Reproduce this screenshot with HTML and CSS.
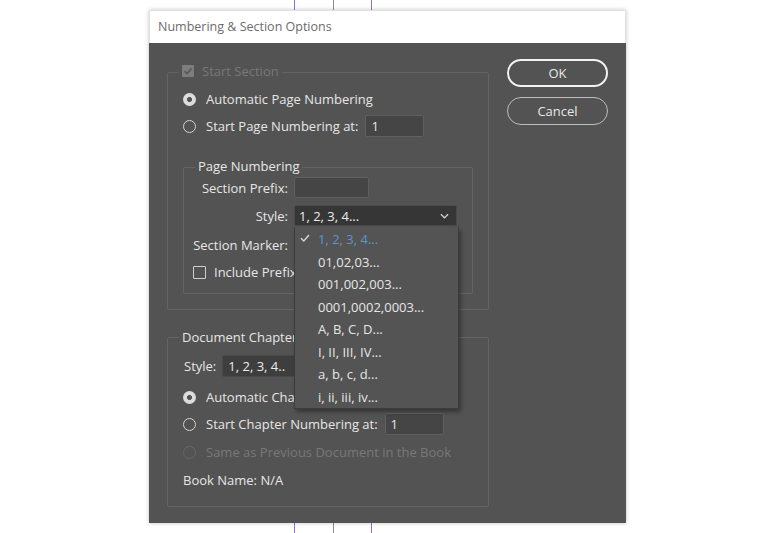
FILE: index.html
```html
<!DOCTYPE html>
<html>
<head>
<meta charset="utf-8">
<link rel="stylesheet" href="styles.css">
</head>
<body>
<div class="stage">
  <div class="guide guide-a"></div>
  <div class="guide guide-b"></div>
  <div class="guide guide-c"></div>

  <div class="dialog">
    <div class="titlebar">Numbering &amp; Section Options</div>
    <div class="dbody">
      <div class="leftcol">
        <div class="group g1">
          <div class="legend disabled"><span class="cbox cbox-dis"><svg viewBox="0 0 12 12" width="12" height="12"><path d="M2.5 6.2 L5 8.6 L9.6 3.4" fill="none" stroke="#5a5a5a" stroke-width="1.8"/></svg></span>Start Section</div>
          <div class="row r-auto"><span class="radio on"></span>Automatic Page Numbering</div>
          <div class="row r-start"><span class="radio"></span>Start Page Numbering at:<span class="field f-start">1</span></div>

          <div class="group sub">
            <div class="legend leg-sub">Page Numbering</div>
            <div class="row r-prefix"><span class="lbl">Section Prefix:</span><span class="field f-prefix"></span></div>
            <div class="row r-style"><span class="lbl">Style:</span><span class="select s-style">1, 2, 3, 4...<svg class="chev" viewBox="0 0 10 6" width="9" height="6"><path d="M1 1 L5 5 L9 1" fill="none" stroke="#cfcfcf" stroke-width="1.4"/></svg></span></div>
            <div class="row r-marker"><span class="lbl">Section Marker:</span></div>
            <div class="row r-incl"><span class="cbox"></span><span class="clip clip-incl">Include Prefix</span></div>
          </div>
        </div>

        <div class="group g2">
          <div class="legend">Document Chapter</div>
          <div class="row r-cstyle"><span class="lbl2">Style:</span><span class="select s-cstyle"><span class="clip clip-sel">1, 2, 3, 4..</span></span></div>
          <div class="row r-cauto"><span class="radio on"></span><span class="clip clip-cauto">Automatic Cha</span></div>
          <div class="row r-cstart"><span class="radio"></span>Start Chapter Numbering at:<span class="field f-cstart">1</span></div>
          <div class="row r-same disabled"><span class="radio radio-dis"></span>Same as Previous Document in the Book</div>
          <div class="row r-book">Book Name: N/A</div>
        </div>
      </div>

      <div class="rightcol">
        <div class="btn btn-ok">OK</div>
        <div class="btn btn-cancel">Cancel</div>
      </div>
    </div>

    <div class="menu">
      <div class="mitem sel"><svg class="check" viewBox="0 0 10 10" width="10" height="10"><path d="M1 5.2 L3.8 8 L9 2" fill="none" stroke="#d8d8d8" stroke-width="1.4"/></svg>1, 2, 3, 4...</div>
      <div class="mitem">01,02,03...</div>
      <div class="mitem">001,002,003...</div>
      <div class="mitem">0001,0002,0003...</div>
      <div class="mitem">A, B, C, D...</div>
      <div class="mitem">I, II, III, IV...</div>
      <div class="mitem">a, b, c, d...</div>
      <div class="mitem">i, ii, iii, iv...</div>
    </div>
  </div>
</div>
</body>
</html>
```
FILE: styles.css
```css
* { box-sizing: border-box; }
html, body { margin: 0; padding: 0; }
body {
  background: #ffffff;
  width: 768px;
  height: 533px;
  overflow: hidden;
  font-family: "Open Sans", "Noto Sans", sans-serif;
  font-size: 13px;
  color: #e6e6e6;
}
.stage { position: relative; width: 768px; height: 533px; padding-top: 10px; }

.guide { position: absolute; top: 0; width: 1px; height: 533px; }
.guide-a { left: 294px; background: #9a6bd8; }
.guide-b { left: 333px; background: #8c8c8c; }
.guide-c { left: 371px; background: #9a6bd8; }

.dialog {
  position: relative;
  margin-left: 149px;
  width: 477px;
  height: 513px;
  box-shadow: 0 0 4px rgba(0,0,0,0.25);
}
.titlebar {
  height: 33px;
  background: #ffffff;
  border: 1px solid #e2e2e2;
  border-bottom: none;
  padding-left: 8px;
  line-height: 31px;
  color: #6c6c6c;
  font-size: 12.5px;
}
.dbody {
  height: 480px;
  background: #535353;
  display: flex;
  padding: 0 18px 0 18px;
}
.leftcol { width: 322px; padding-top: 29px; }
.rightcol {
  margin-left: 18px;
  padding-top: 16px;
  display: flex;
  flex-direction: column;
  gap: 10px;
}
.btn {
  width: 101px;
  height: 28px;
  border-radius: 14px;
  display: flex;
  align-items: center;
  justify-content: center;
  font-size: 13px;
  color: #e8e8e8;
}
.btn-ok { border: 2px solid #f2f2f2; }
.btn-cancel { border: 1px solid #bdbdbd; }

.group {
  border: 1px solid #646464;
  border-radius: 2px;
}
.g1 { height: 238px; padding-left: 15px; }
.g2 { margin-top: 27px; height: 170px; padding-left: 15px; }

.legend {
  display: flex;
  align-items: center;
  width: max-content;
  height: 20px;
  margin: -12px 0 0 -4px;
  padding: 0 4px 0 3px;
  background: #535353;
  white-space: nowrap;
}
.g2 .legend { margin-top: -11px; }
.leg-sub { margin: -12px 0 0 11px; padding: 0 3px; }
.disabled { color: #787878; }

.row {
  display: flex;
  align-items: center;
  height: 22px;
  white-space: nowrap;
}
.r-auto { margin-top: 7px; }
.r-start { margin-top: 5px; }

.clip { display: block; overflow: hidden; white-space: nowrap; }

.radio {
  width: 13px;
  height: 13px;
  border-radius: 50%;
  border: 1.5px solid #d4d4d4;
  margin-right: 10px;
  flex: none;
}
.radio.on {
  border: none;
  background: radial-gradient(circle, #555 0 2.2px, #dcdcdc 2.8px);
}
.radio-dis { border-color: #686868; }

.cbox {
  width: 12px;
  height: 12px;
  border: 1.5px solid #cfcfcf;
  border-radius: 1px;
  margin-right: 8px;
  flex: none;
  display: flex;
}
.cbox-dis {
  border: none;
  background: #7d7d7d;
}

.field {
  height: 22px;
  background: #454545;
  border: 1px solid #5f5f5f;
  border-radius: 2px;
  padding-left: 5px;
  line-height: 20px;
  flex: none;
}
.f-start { width: 59px; margin-left: 7px; }

.sub {
  margin: 30px 15px 0 0;
  height: 127px;
  padding-left: 0;
}
.lbl {
  width: 104px;
  text-align: right;
  margin-right: 6px;
  flex: none;
}
.r-prefix { margin-top: 1px; height: 21px; }
.f-prefix { width: 75px; height: 21px; }
.r-style { margin-top: 7px; height: 21px; }
.select {
  height: 21px;
  background: #363636;
  border: 1px solid #4a4a4a;
  border-radius: 2px;
  padding-left: 4px;
  display: flex;
  align-items: center;
  color: #ececec;
  flex: none;
  position: relative;
}
.s-style { width: 163px; }
.chev { position: absolute; right: 7px; top: 7px; }
.r-marker { margin-top: 8px; height: 21px; }
.r-incl { margin-top: 6px; padding-left: 9px; }
.r-incl .cbox { margin-right: 8px; width: 13px; height: 13px; }
.clip-incl { max-width: 80px; }

.lbl2 { margin-right: 6px; margin-left: 1px; }
.r-cstyle { margin-top: 8px; }
.s-cstyle { width: 120px; height: 22px; background: #3e3e3e; padding-left: 5px; }
.clip-sel { max-width: 64px; }
.r-cauto { margin-top: 9px; }
.clip-cauto { max-width: 88px; }
.r-cstart { margin-top: 5px; }
.f-cstart { width: 59px; margin-left: 7px; }
.r-same { margin-top: 6px; }
.r-book { margin-top: 6px; }

.menu {
  position: absolute;
  left: 145px;
  top: 217px;
  width: 165px;
  height: 182px;
  background: #545454;
  border: 1px solid #3c3c3c;
  border-top: none;
  box-shadow: 2px 3px 4px rgba(0,0,0,0.35);
  padding-top: 1px;
}
.mitem {
  height: 22.5px;
  display: flex;
  align-items: center;
  padding-left: 23px;
  position: relative;
  color: #e6e6e6;
  white-space: nowrap;
}
.mitem.sel { color: #5d93d6; }
.check { position: absolute; left: 5px; top: 5px; }
```
